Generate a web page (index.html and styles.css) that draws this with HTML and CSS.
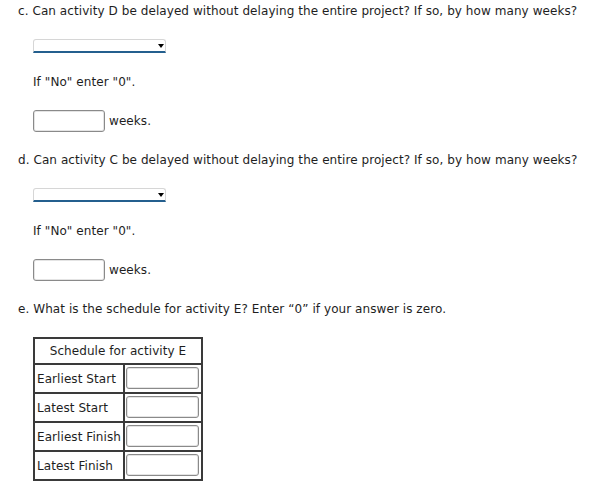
FILE: index.html
```html
<!DOCTYPE html>
<html>
<head>
<meta charset="utf-8">
<link rel="stylesheet" href="styles.css">
</head>
<body>
<div class="page">
  <section class="part">
    <p class="question">c. Can activity D be delayed without delaying the entire project? If so, by how many weeks?</p>
    <div class="indent">
      <div class="select"><span class="caret"></span></div>
      <p class="hint">If "No" enter "0".</p>
      <div class="answer"><span class="box"></span><span class="unit">weeks.</span></div>
    </div>
  </section>
  <section class="part">
    <p class="question">d. Can activity C be delayed without delaying the entire project? If so, by how many weeks?</p>
    <div class="indent">
      <div class="select"><span class="caret"></span></div>
      <p class="hint">If "No" enter "0".</p>
      <div class="answer"><span class="box"></span><span class="unit">weeks.</span></div>
    </div>
  </section>
  <section class="part">
    <p class="question">e. What is the schedule for activity E? Enter “0” if your answer is zero.</p>
    <div class="indent">
      <table class="sched">
        <tr><th colspan="2">Schedule for activity E</th></tr>
        <tr><td class="lbl">Earliest Start</td><td class="inp"><span class="cellbox"></span></td></tr>
        <tr><td class="lbl">Latest Start</td><td class="inp"><span class="cellbox"></span></td></tr>
        <tr><td class="lbl">Earliest Finish</td><td class="inp"><span class="cellbox"></span></td></tr>
        <tr class="last"><td class="lbl">Latest Finish</td><td class="inp"><span class="cellbox"></span></td></tr>
      </table>
    </div>
  </section>
</div>
</body>
</html>
```
FILE: styles.css
```css
html, body { margin: 0; padding: 0; background: #fff; }
body {
  font-family: "DejaVu Sans", Verdana, sans-serif;
  font-size: 12px;
  letter-spacing: 0.07px;
  color: #1e1e1e;
}
.page { padding: 3px 0 0 18px; }
.question { margin: 0; line-height: 16px; }
.indent { padding-left: 15px; }
.select {
  position: relative;
  width: 131px;
  height: 11px;
  margin-top: 20px;
  border: 1px solid #d6d6d6;
  border-bottom: 2px solid #245f8e;
  border-radius: 3px 3px 0 0;
}
.caret {
  position: absolute;
  right: 1px;
  top: 4px;
  border-left: 3px solid transparent;
  border-right: 3px solid transparent;
  border-top: 4px solid #000;
}
.hint { margin: 21px 0 0; line-height: 16px; }
.answer { display: flex; align-items: center; margin-top: 20px; height: 22px; }
.box {
  display: block;
  width: 70px;
  height: 20px;
  border: 1px solid #8a8a8a;
  border-radius: 3px;
  box-shadow: inset 0 0 0 1px #e4e4e4;
}
.unit { margin-left: 4px; }
.part + .part { margin-top: 20px; }
.sched {
  margin-top: 20px;
  border-collapse: separate;
  border-spacing: 0;
  border: 2px solid #3a3a3a;
  table-layout: fixed;
}
.sched th, .sched td { padding: 0; }
.sched th {
  font-weight: normal;
  height: 24px;
  text-align: center;
  border-bottom: 2px solid #3a3a3a;
}
.sched td { height: 27px; border-bottom: 2px solid #3a3a3a; }
.sched tr.last td { border-bottom: 0; }
.lbl {
  width: 86px;
  padding-left: 2px !important;
  border-right: 2px solid #3a3a3a;
  white-space: nowrap;
}
.inp { width: 73px; padding: 0 2px 0 1px !important; }
.cellbox {
  display: block;
  width: 71px;
  height: 20px;
  border: 1px solid #8a8a8a;
  border-radius: 3px;
  box-shadow: inset 0 0 0 1px #e4e4e4;
  margin-top: -1px;
}
```
